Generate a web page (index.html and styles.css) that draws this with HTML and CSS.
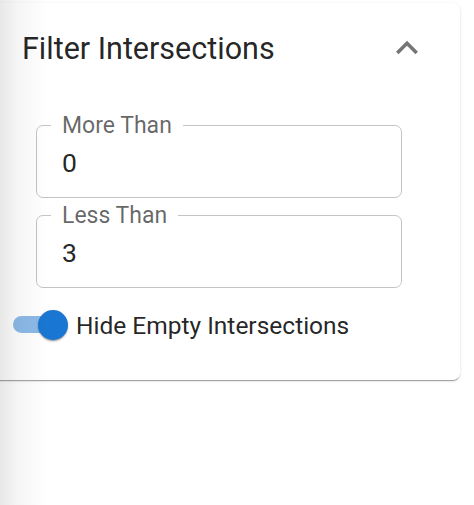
FILE: index.html
```html
<!DOCTYPE html>
<html lang="en">
<head>
<meta charset="UTF-8">
<meta name="viewport" content="width=device-width, initial-scale=1.0">
<title>Filter Intersections</title>
<link rel="stylesheet" href="styles.css">
</head>
<body>
<div class="panel">
    <div class="panel-header">
        <span class="panel-title">Filter Intersections</span>
        <svg class="expand-icon" viewBox="0 0 24 24" width="44" height="44">
            <path d="M12 8l-6 6 1.41 1.41L12 10.83l4.59 4.58L18 14z"></path>
        </svg>
    </div>
    <div class="panel-details">
        <fieldset class="field">
            <legend>More Than</legend>
            <input type="number" class="field-input" value="0">
        </fieldset>
        <fieldset class="field">
            <legend>Less Than</legend>
            <input type="number" class="field-input" value="3">
        </fieldset>
        <label class="switch-row">
            <span class="switch">
                <span class="switch-track"></span>
                <span class="switch-thumb"></span>
            </span>
            Hide Empty Intersections
        </label>
    </div>
</div>
<div class="edge-shade"></div>
</body>
</html>
```

FILE: styles.css
```css
body {
    margin: 0;
    background: #ffffff;
    font-family: Roboto, "Liberation Sans", sans-serif;
    color: rgba(0, 0, 0, 0.87);
    height: 505px;
    position: relative;
    overflow: hidden;
}

/* grey shading along the left edge, lies over everything */
.edge-shade {
    position: absolute;
    top: 0;
    left: 0;
    bottom: 0;
    width: 48px;
    background: linear-gradient(to right, rgba(0, 0, 0, 0.09), rgba(0, 0, 0, 0.04) 18px, rgba(0, 0, 0, 0) 48px);
    pointer-events: none;
}

.panel {
    margin: 3px 14px 0 -10px;
    height: 377px;
    background: #ffffff;
    border-radius: 7px;
    box-shadow: 0 2px 1px -1px rgba(0, 0, 0, 0.22), 0 1px 1px 0 rgba(0, 0, 0, 0.14), 0 1px 3px 0 rgba(0, 0, 0, 0.12);
}

.panel-header {
    display: flex;
    align-items: center;
    justify-content: space-between;
    height: 90px;
    padding: 0 31px 0 32px;
}

.panel-title {
    font-size: 30.5px;
}

.expand-icon {
    fill: rgba(0, 0, 0, 0.54);
}

.panel-details {
    padding: 21px 58px 0 46px;
}

.field {
    margin: 0 0 6px 0;
    padding: 0 24px 19px 25px;
    border: 1.5px solid #c4c4c4;
    border-radius: 7px;
}

.field legend {
    margin-left: -11px;
    padding: 0 11px;
    font-size: 23px;
    line-height: 23px;
    color: rgba(0, 0, 0, 0.6);
}

.field-input {
    display: block;
    width: 100%;
    border: none;
    outline: none;
    padding: 11px 0 0 0;
    font-family: Roboto, "Liberation Sans", sans-serif;
    font-size: 26.5px;
    line-height: 30px;
    color: rgba(0, 0, 0, 0.87);
    background: transparent;
    -moz-appearance: textfield;
}

.field-input::-webkit-inner-spin-button,
.field-input::-webkit-outer-spin-button {
    -webkit-appearance: none;
    margin: 0;
}

.switch-row {
    display: flex;
    align-items: center;
    gap: 8px;
    margin: 22px 0 0 -23px;
    font-size: 24.5px;
}

.switch {
    position: relative;
    width: 55px;
    height: 30px;
}

.switch-track {
    position: absolute;
    left: 0;
    top: 6px;
    width: 49px;
    height: 17px;
    border-radius: 9px;
    background: rgba(25, 118, 210, 0.5);
}

.switch-thumb {
    position: absolute;
    left: 25px;
    top: 0;
    width: 30px;
    height: 30px;
    border-radius: 50%;
    background: #1976d2;
    box-shadow: 0 2px 2px -1px rgba(0, 0, 0, 0.25), 0 1px 1px 0 rgba(0, 0, 0, 0.14), 0 1px 3px 0 rgba(0, 0, 0, 0.12);
}
```
